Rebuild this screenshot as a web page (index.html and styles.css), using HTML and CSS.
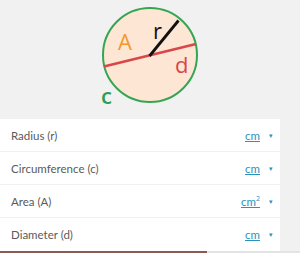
FILE: index.html
```html
<!DOCTYPE html>
<html lang="en">
<head>
    <meta charset="UTF-8">
    <meta name="viewport" content="width=device-width, initial-scale=1.0">
    <title>Circle Calculator</title>
    <link rel="stylesheet" href="styles.css">
</head>
<body>
    <div class="figure">
        <svg width="300" height="119" viewBox="0 0 300 119">
            <circle cx="150" cy="55" r="47" fill="#fde6d4" stroke="#36a553" stroke-width="2"/>
            <line x1="104" y1="66.5" x2="196" y2="44" stroke="#d8484a" stroke-width="2.8"/>
            <line x1="149.5" y1="56" x2="178.5" y2="20.5" stroke="#111" stroke-width="2.8"/>
            <text x="118" y="50" class="lbl lbl-a">A</text>
            <text x="153" y="39" class="lbl lbl-r">r</text>
            <text x="175" y="73" class="lbl lbl-d">d</text>
            <text x="101" y="104" class="lbl lbl-c">c</text>
        </svg>
    </div>

    <div class="panel">
        <div class="row">
            <span class="name">Radius (r)</span>
            <a class="unit" href="#">cm</a><span class="caret">▾</span>
        </div>
        <div class="row">
            <span class="name">Circumference (c)</span>
            <a class="unit" href="#">cm</a><span class="caret">▾</span>
        </div>
        <div class="row">
            <span class="name">Area (A)</span>
            <a class="unit" href="#">cm<sup>2</sup></a><span class="caret">▾</span>
        </div>
        <div class="row">
            <span class="name">Diameter (d)</span>
            <a class="unit" href="#">cm</a><span class="caret">▾</span>
        </div>
    </div>
    <div class="bar"><div class="bar-fill"></div></div>
</body>
</html>
```

FILE: styles.css
```css
* {
    margin: 0;
    padding: 0;
    box-sizing: border-box;
    font-family: 'Open Sans', 'Noto Sans', sans-serif;
}

body {
    width: 300px;
    height: 253px;
    background: #f1f1f1;
    overflow: hidden;
}

.figure {
    height: 119px;
}

.figure svg {
    display: block;
}

.lbl {
    font-size: 22px;
    font-family: 'Open Sans', sans-serif;
}

.lbl-a {
    fill: #f19a2c;
}

.lbl-r {
    fill: #111;
}

.lbl-d {
    fill: #d8484a;
}

.lbl-c {
    fill: #2e9e55;
    font-weight: 600;
}

.panel {
    width: 280px;
    background: #fff;
}

.row {
    height: 33px;
    display: flex;
    align-items: center;
    padding: 0 7px 0 11px;
    border-bottom: 1px solid #f0f0f0;
}

.row:last-child {
    border-bottom: none;
}

.name {
    flex: 1;
    font-family: 'Lato', sans-serif;
    font-size: 11.5px;
    color: #5a5a5a;
}

.unit {
    font-family: 'Lato', sans-serif;
    font-size: 11.5px;
    color: #2a93bd;
    text-decoration: underline;
}

.unit sup {
    font-size: 7px;
    line-height: 0;
}

.caret {
    font-size: 7px;
    color: #2a93bd;
    margin-left: 9px;
}

.bar {
    height: 2px;
    background: #e4e4e4;
}

.bar-fill {
    width: 207px;
    height: 2px;
    background: #8a5b52;
}
```
